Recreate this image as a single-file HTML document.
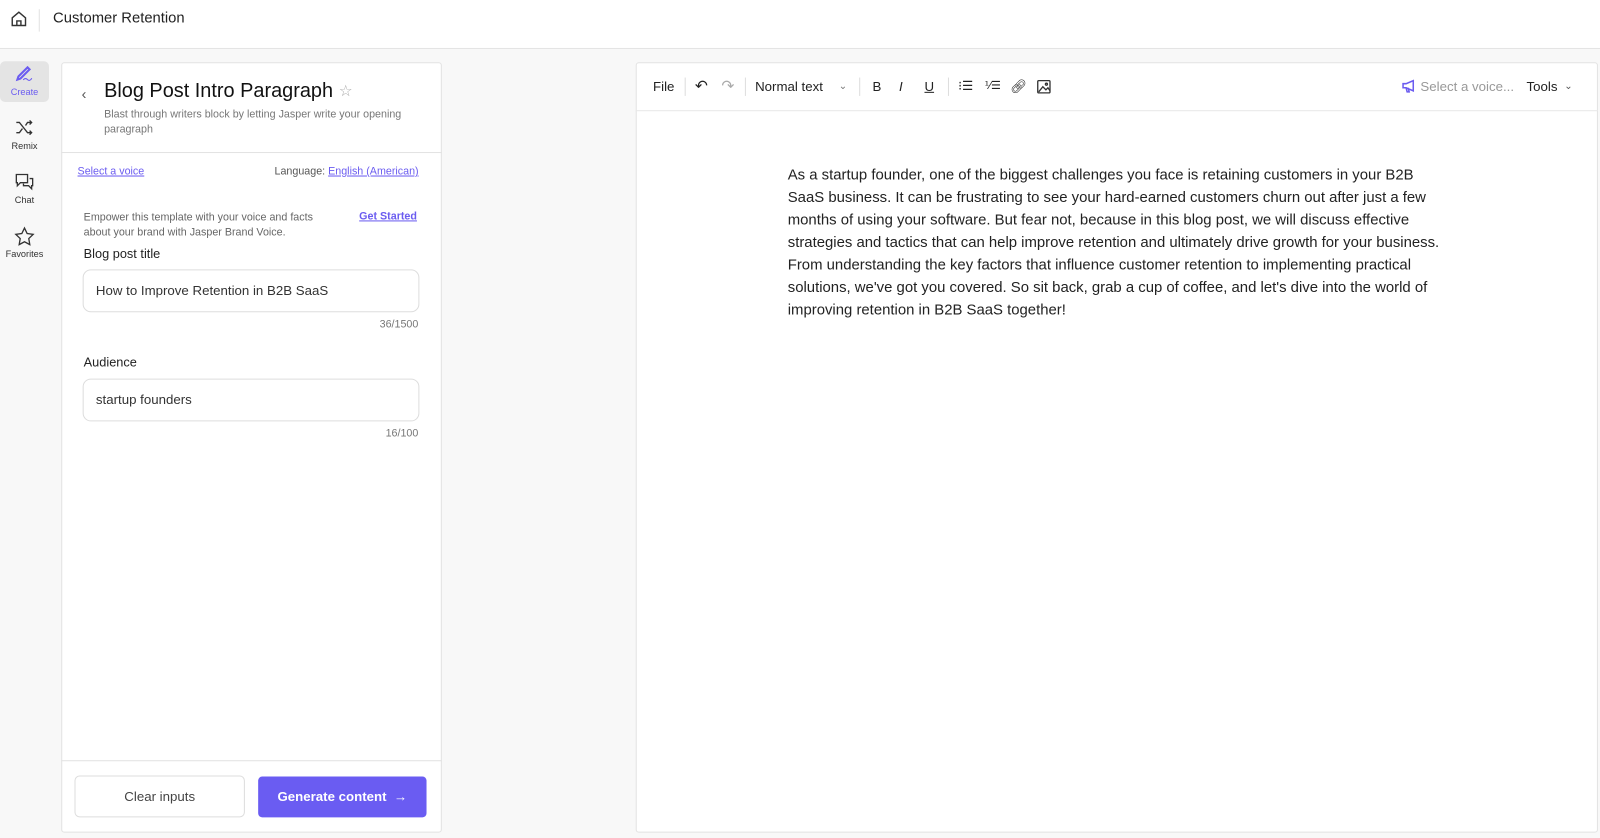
<!DOCTYPE html>
<html><head><meta charset="utf-8"><style>
*{box-sizing:border-box;margin:0;padding:0}
html,body{width:1600px;height:838px;overflow:hidden;background:#f8f8f8}
#w{width:1568px;height:822px;position:relative;transform:scale(1.0204);transform-origin:0 0;font-family:"Liberation Sans",sans-serif;color:#1a1a1a}
.abs{position:absolute}
.top{left:0;top:0;width:1568px;height:48px;background:#fff;border-bottom:1px solid #e3e3e3}
.panel{background:#fff;border:1px solid #e2e2e2;border-radius:3px}
.nav{width:48px;text-align:center;font-size:9px;color:#333}
.link{color:#6b5cf0;text-decoration:underline}
.inp{border:1px solid #ddd;border-radius:8px;background:#fff;font-size:13px;color:#333;padding-left:12px;line-height:40px}
.tb{font-size:13px;color:#222;top:77px}
.sep{width:1px;height:18px;background:#ddd;top:76px}
</style></head><body><div id="w">
<div class="abs top"></div>
<svg class="abs" style="left:10px;top:10px" width="17" height="17" viewBox="0 0 17 17" fill="none" stroke="#333" stroke-width="1.4"><path d="M2 7.5L8.5 2 15 7.5V15H2z"/><path d="M6.5 15v-4.5h4V15"/></svg>
<div class="abs" style="left:38px;top:9px;width:1px;height:22px;background:#e3e3e3"></div>
<div class="abs" style="left:52px;top:10px;font-size:14.5px;color:#222">Customer Retention</div>

<div class="abs" style="left:0;top:60px;width:48px;height:40px;background:#e4e4e4;border-radius:5px"></div>
<svg class="abs" style="left:15px;top:64px" width="18" height="16" viewBox="0 0 18 16" fill="none" stroke="#6b5cf0" stroke-width="2" stroke-linecap="round"><path d="M3 11L12 2l2 2-9 9-3 1z"/><path d="M8 14q2-2 4 0t4-1" stroke-width="1"/></svg>
<div class="abs nav" style="left:0;top:85px;color:#6b5cf0">Create</div>
<svg class="abs" style="left:15px;top:117px" width="18" height="16" viewBox="0 0 18 16" fill="none" stroke="#333" stroke-width="1.3"><path d="M1 3h3l8 10h4M1 13h3l3-4M10 6l2-3h4M14 1l2 2-2 2M14 11l2 2-2 2"/></svg>
<div class="abs nav" style="left:0;top:138px">Remix</div>
<svg class="abs" style="left:14px;top:169px" width="20" height="18" viewBox="0 0 20 18" fill="none" stroke="#333" stroke-width="1.3"><path d="M2 2h11v8H6l-3 3V10H2z"/><path d="M15 6h3v7h-1v3l-3-3H9v-2"/></svg>
<div class="abs nav" style="left:0;top:191px">Chat</div>
<svg class="abs" style="left:14px;top:222px" width="20" height="19" viewBox="0 0 20 19" fill="none" stroke="#333" stroke-width="1.3"><path d="M10 1.5l2.6 5.4 5.9.8-4.3 4.1 1 5.9L10 14.9l-5.2 2.8 1-5.9L1.5 7.7l5.9-.8z"/></svg>
<div class="abs nav" style="left:0;top:244px">Favorites</div>

<div class="abs panel" style="left:60px;top:61px;width:373px;height:755px"></div>
<div class="abs" style="left:60px;top:149px;width:373px;height:1px;background:#e2e2e2"></div>
<div class="abs" style="left:60px;top:745px;width:373px;height:1px;background:#e2e2e2"></div>
<div class="abs" style="left:80px;top:84px;font-size:14px;color:#555">‹</div>
<div class="abs" style="left:102px;top:78px;font-size:19.5px;color:#111">Blog Post Intro Paragraph</div>
<div class="abs" style="left:332px;top:80px;font-size:15px;color:#aaa">☆</div>
<div class="abs" style="left:102px;top:105px;font-size:10.5px;color:#777;line-height:15px;width:320px">Blast through writers block by letting Jasper write your opening paragraph</div>
<div class="abs link" style="left:76px;top:162px;font-size:10.5px">Select a voice</div>
<div class="abs" style="left:269px;top:162px;font-size:10.5px;color:#555">Language: <span class="link">English (American)</span></div>
<div class="abs" style="left:82px;top:206px;font-size:10.5px;color:#666;line-height:15px;width:250px">Empower this template with your voice and facts about your brand with Jasper Brand Voice.</div>
<div class="abs link" style="left:352px;top:206px;font-size:10.5px;font-weight:bold">Get Started</div>
<div class="abs" style="left:82px;top:242px;font-size:12.5px;color:#222">Blog post title</div>
<div class="abs inp" style="left:81px;top:264px;width:330px;height:42px">How to Improve Retention in B2B SaaS</div>
<div class="abs" style="left:360px;top:312px;width:50px;text-align:right;font-size:10.5px;color:#777">36/1500</div>
<div class="abs" style="left:82px;top:348px;font-size:12.5px;color:#222">Audience</div>
<div class="abs inp" style="left:81px;top:371px;width:330px;height:42px">startup founders</div>
<div class="abs" style="left:360px;top:419px;width:50px;text-align:right;font-size:10.5px;color:#777">16/100</div>
<div class="abs" style="left:73px;top:760px;width:167px;height:41px;border:1px solid #ddd;border-radius:5px;background:#fff;text-align:center;line-height:39px;font-size:13px;color:#444">Clear inputs</div>
<div class="abs" style="left:253px;top:761px;width:165px;height:40px;border-radius:4px;background:#6a5cf2;text-align:center;line-height:40px;font-size:13px;color:#fff;font-weight:bold">Generate content &nbsp;→</div>

<div class="abs panel" style="left:623px;top:61px;width:943px;height:755px"></div>
<div class="abs" style="left:623px;top:108px;width:943px;height:1px;background:#e8e8e8"></div>
<div class="abs tb" style="left:640px">File</div>
<div class="abs sep" style="left:671px"></div>
<div class="abs tb" style="left:681px;font-size:15px;top:75px">↶</div>
<div class="abs tb" style="left:707px;font-size:15px;top:75px;color:#aaa">↷</div>
<div class="abs sep" style="left:730px"></div>
<div class="abs tb" style="left:740px">Normal text</div>
<div class="abs tb" style="left:822px;font-size:10px;top:79px;color:#777">⌄</div>
<div class="abs sep" style="left:842px"></div>
<div class="abs tb" style="left:855px">B</div>
<div class="abs tb" style="left:881px;font-style:italic">I</div>
<div class="abs tb" style="left:906px;text-decoration:underline">U</div>
<div class="abs sep" style="left:929px"></div>
<div class="abs tb" style="left:939px;font-size:12px">⁝☰</div>
<div class="abs tb" style="left:965px;font-size:11px">⅟☰</div>
<div class="abs tb" style="left:990px;font-size:13px">🔗︎</div>
<svg class="abs" style="left:1016px;top:78px" width="14" height="14" viewBox="0 0 14 14" fill="none" stroke="#333" stroke-width="1.3"><rect x="1" y="1" width="12" height="12" rx="1"/><path d="M2 12l4-5 3 3 2-2 2 3"/><circle cx="9.5" cy="4.5" r="1"/></svg>
<svg class="abs" style="left:1373px;top:77px" width="16" height="15" viewBox="0 0 16 15" fill="none" stroke="#6b5cf0" stroke-width="1.5"><path d="M2 5h3l7-3v10L5 9H2z M5 9l1 4h2l-1-4"/></svg>
<div class="abs tb" style="left:1392px;color:#999">Select a voice...</div>
<div class="abs tb" style="left:1496px">Tools</div>
<div class="abs tb" style="left:1533px;font-size:10px;top:79px;color:#555">⌄</div>

<div class="abs" style="left:772px;top:161px;font-size:14.6px;line-height:22px;color:#222;white-space:nowrap">As a startup founder, one of the biggest challenges you face is retaining customers in your B2B<br>SaaS business. It can be frustrating to see your hard-earned customers churn out after just a few<br>months of using your software. But fear not, because in this blog post, we will discuss effective<br>strategies and tactics that can help improve retention and ultimately drive growth for your business.<br>From understanding the key factors that influence customer retention to implementing practical<br>solutions, we've got you covered. So sit back, grab a cup of coffee, and let's dive into the world of<br>improving retention in B2B SaaS together!</div>
</div></body></html>
